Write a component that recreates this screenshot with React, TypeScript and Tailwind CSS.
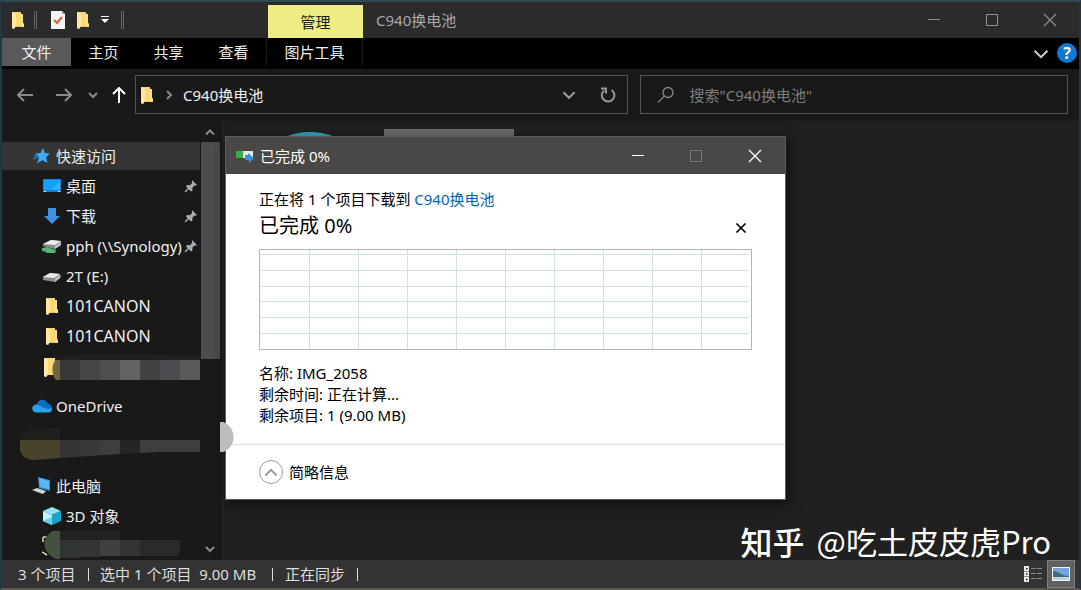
import React, { useState } from "react";

interface IconProps {
    className?: string;
}

interface TileSet {
    x: number;
    width: number;
    fill: string;
}

const FolderIcon: React.FC<IconProps> = ({ className = "" }) => (
    <svg className={className} width="14" height="18" viewBox="0 0 14 18" aria-hidden="true">
        <path d="M1 1h9v2h2v9l1 1v3H4l-1 2-2-1z" fill="#f0bf50" />
        <path d="M1 1l4 1v13l-2 3-2-1z" fill="#ffe9a0" />
        <path d="M5 1h5v14H5z" fill="#fbd778" />
        <path d="M10 3h2v9l1 1v3h-3z" fill="#ffdf86" />
    </svg>
);

const CheckDocIcon = () => (
    <svg width="16" height="20" viewBox="0 0 16 20" aria-hidden="true">
        <path d="M1 1h11l3 3v15H1z" fill="#f4f4f4" />
        <path d="M12 1v3h3z" fill="#9a9a9a" />
        <path d="M4 10l3 3 5-6" fill="none" stroke="#d9602c" strokeWidth="2" />
    </svg>
);

const StarIcon = () => (
    <svg width="18" height="16" viewBox="0 0 18 16" aria-hidden="true">
        <path d="M10 0l2 5 5 .5-4 3.800 1.500 5.700-5-2.800-5.500 3 2-5.700L2 5.500l5.500-.4z" fill="#3fa9f5" />
        <path d="M1 8l4-1M0 11l5-2" stroke="#2879bd" strokeWidth="1.500" />
    </svg>
);

const DesktopIcon = () => (
    <svg width="18" height="14" viewBox="0 0 18 14" aria-hidden="true">
        <rect width="18" height="13" fill="#1183d8" />
        <path d="M1 1h16v10H1z" fill="#16a0fa" />
        <path d="M8 11l9-9v9z" fill="#32b2ff" />
        <path d="M1 12.500h2M15 12.500h2" stroke="#e6f5ff" />
    </svg>
);

const DownloadIcon = () => (
    <svg width="18" height="18" viewBox="0 0 18 18" aria-hidden="true">
        <path d="M5 1h8v8h4l-8 8-8-8h4z" fill="#3f92e4" />
    </svg>
);

const DriveIcon = ({ network = false }: { network?: boolean }) => (
    <svg width="20" height="16" viewBox="0 0 20 16" aria-hidden="true">
        {network ? (
            <>
                <path d="M1 6l8-4 10 1v4l-6 4-12-3z" fill="#8c8c8c" />
                <path d="M1 6l8-4 10 1-6 4z" fill="#ececec" />
                <path d="M13 8l6-4v3l-6 4z" fill="#c4c4c4" />
                <path d="M0 10l5-1 3 1 6 2-1 3H5l-1-1-4-1z" fill="#55b470" />
            </>
        ) : (
            <>
                <path d="M1 9l7-4 10 1 1 3-6 5-12-2z" fill="#8c8c8c" />
                <path d="M1 9l7-4 10 1-6 4z" fill="#e8e8e8" />
                <path d="M13 11l5-4v3l-5 4z" fill="#c4c4c4" />
            </>
        )}
    </svg>
);

const CloudIcon = () => (
    <svg width="20" height="14" viewBox="0 0 20 14" aria-hidden="true">
        <path d="M5 5a5.500 5.500 0 0 1 10.500-.5A5 5 0 0 1 20 9.500L10 12 1 11A4 4 0 0 1 5 5z" fill="#0f6cbd" />
        <path d="M4 13.500a4 4 0 0 1-3.500-5C2 6 5 5.500 7 6.500l8 3.500 4.800-1c.6 2.500-.8 4.500-3 4.500z" fill="#2aa2f0" />
    </svg>
);

const ComputerIcon = () => (
    <svg width="20" height="18" viewBox="0 0 20 18" aria-hidden="true">
        <path d="M6 0l12 3v11L7 11z" fill="#2d8ad4" />
        <path d="M7 1l10 3v8L8 10z" fill="#5bb7f2" />
        <path d="M0 13l5-2 9 3-3 3-3-1z" fill="#d5d5d5" />
    </svg>
);

const CubeIcon = () => (
    <svg width="18" height="18" viewBox="0 0 18 18" aria-hidden="true">
        <path d="M9 0l9 4-9 4-9-4z" fill="#8fe3f3" />
        <path d="M0 4l9 4v10l-9-4z" fill="#c3f1fa" />
        <path d="M0 14l9-4v8z" fill="#5fd0e8" />
        <path d="M18 4L9 8v10l9-4z" fill="#18a3c8" />
    </svg>
);

const PinIcon = () => (
    <svg className="shrink-0" width="14" height="14" viewBox="0 0 14 14" aria-hidden="true">
        <path d="M8 1l5 5-1.500.8-1-.2-2.200 2.200.2 2.700-1.500 1L2 7.500l1-1.500 3 .2L8 4z" fill="#a5adb3" />
        <path d="M5 9l-4 4" stroke="#a5adb3" strokeWidth="1.500" />
    </svg>
);

const TransferIcon = () => (
    <svg width="20" height="14" viewBox="0 0 20 14" aria-hidden="true">
        <rect x="1" y="2" width="17" height="7" fill="#e4e9e4" />
        <rect x="1" y="2" width="7" height="7" fill="#38b045" />
        <path d="M10 6h3V4l6 5-5 5v-3h-4z" fill="#3d8fdd" />
    </svg>
);

const Chevron = ({ dir, size = 10, className = "", stroke = 2 }: { dir: "up" | "down" | "right"; size?: number; className?: string; stroke?: number }) => {
    const paths = {
        up: "M1 7.500l4-4 4 4",
        down: "M1 3l4 4 4-4",
        right: "M3 1l4 4-4 4",
    };
    return (
        <svg className={className} width={size} height={size} viewBox="0 0 10 10" aria-hidden="true">
            <path d={paths[dir]} fill="none" stroke="currentColor" strokeWidth={(stroke * 10) / size} />
        </svg>
    );
};

const Arrow = ({ rotate, className = "" }: { rotate: number; className?: string }) => (
    <svg className={className} width="16" height="16" viewBox="0 0 16 16" aria-hidden="true">
        <g transform={`rotate(${rotate} 8 8)`} fill="none" stroke="currentColor" strokeWidth="2">
            <path d="M1 8h15M7 2L1 8l6 6" />
        </g>
    </svg>
);

const WindowGlyph = ({ kind }: { kind: "min" | "max" | "close" }) => (
    <svg width="14" height="14" viewBox="0 0 14 14" fill="none" stroke="currentColor" aria-hidden="true">
        {kind === "min" && <path d="M1 6.500h12" />}
        {kind === "max" && <rect x="1.500" y="1.500" width="11" height="11" />}
        {kind === "close" && <path d="M1 1l12 12M13 1L1 13" strokeWidth="1.300" />}
    </svg>
);

// censored labels in the tree
const hiddenFolder: TileSet[] = [
    { x: 20, width: 20, fill: "#383838" },
    { x: 40, width: 20, fill: "#454545" },
    { x: 60, width: 20, fill: "#4e4e4e" },
    { x: 80, width: 20, fill: "#626262" },
    { x: 100, width: 20, fill: "#424242" },
    { x: 120, width: 20, fill: "#4b4d50" },
    { x: 140, width: 20, fill: "#5a5a5a" },
];

const hiddenAccount: TileSet[] = [
    { x: 40, width: 20, fill: "#343434" },
    { x: 60, width: 20, fill: "#393939" },
    { x: 80, width: 20, fill: "#3e3e3e" },
    { x: 100, width: 20, fill: "#252525" },
    { x: 120, width: 60, fill: "#3e3e3e" },
];

const TreeRow = ({ icon, label, nested = false, pinned = false, large = false, selected = false }: {
    icon: React.ReactNode;
    label: string;
    nested?: boolean;
    pinned?: boolean;
    large?: boolean;
    selected?: boolean;
}) => (
    <li className={`my-px flex h-7 shrink-0 items-center gap-0.5 pr-0.5 ${nested ? "pl-[38px]" : "pl-7"} ${selected ? "bg-[#343434]" : ""}`}>
        <span className="flex w-6 shrink-0 justify-center">{icon}</span>
        <button type="button" className={`min-w-0 flex-1 overflow-hidden whitespace-nowrap text-left text-[#f0f0f0] ${large ? "text-base" : ""}`}>
            {label}
        </button>
        {pinned && <PinIcon />}
    </li>
);

const Sidebar = () => (
    <nav aria-label="导航窗格" className="flex w-[221px] shrink-0 border-r border-[#2c2c2c] bg-[#191919]">
        <ul className="flex min-w-0 flex-1 flex-col pt-5">
            <TreeRow icon={<StarIcon />} label="快速访问" selected />
            <TreeRow icon={<DesktopIcon />} label="桌面" nested pinned />
            <TreeRow icon={<DownloadIcon />} label="下载" nested pinned />
            <TreeRow icon={<DriveIcon network />} label="pph (\\Synology)" nested pinned />
            <TreeRow icon={<DriveIcon />} label="2T (E:)" nested />
            <TreeRow icon={<FolderIcon />} label="101CANON" nested large />
            <TreeRow icon={<FolderIcon />} label="101CANON" nested large />
            <li className="mb-2.5 h-[30px] shrink-0 pl-[38px]">
                <svg width="160" height="30" viewBox="0 0 160 30" aria-hidden="true">
                    <path d="M4 7h11v17h-7l-2 2-2-1z" fill="#fbd778" />
                    <path d="M4 7l4 1v14l-2 4-2-1z" fill="#ffe9a0" />
                    <path d="M20 6c20-5 50-3 140-2v5H16z" fill="#202020" />
                    <path d="M20 9h-5c-4 7-3 16 1 20h4z" fill="#6f6440" />
                    {hiddenFolder.map((t) => (
                        <rect key={t.x} x={t.x} y="9" width={t.width} height="20" fill={t.fill} />
                    ))}
                </svg>
            </li>
            <TreeRow icon={<CloudIcon />} label="OneDrive" />
            <li className="h-[50px] shrink-0 pl-[18px]">
                <svg width="180" height="50" viewBox="0 0 180 50" aria-hidden="true">
                    <path d="M0 19c0-8 10-12 40-12v12z" fill="#201f1b" />
                    <path d="M0 19h40v18l-26 2C4 38 1 34 0 28z" fill="#4a432c" />
                    <clipPath id="smear">
                        <path d="M40 19h140v12h-40l-40 2-60 4z" />
                    </clipPath>
                    <g clipPath="url(#smear)">
                        {hiddenAccount.map((t) => (
                            <rect key={t.x} x={t.x} y="19" width={t.width} height="20" fill={t.fill} />
                        ))}
                    </g>
                </svg>
            </li>
            <TreeRow icon={<ComputerIcon />} label="此电脑" />
            <TreeRow icon={<CubeIcon />} label="3D 对象" nested />
            <li className="h-7 shrink-0 pl-10">
                <svg width="140" height="28" viewBox="0 0 140 28" aria-hidden="true">
                    <path d="M1 6h4M1 6v5M0 21l5 3" stroke="#d8d4a0" strokeWidth="1.500" />
                    <path d="M18 0v28h-4C4 24 0 14 4 6 8 1 12-2 18-3z" fill="#41523f" />
                    <path d="M18-3c24-1 40 0 60 0v12H18z" fill="#222" />
                    <path d="M18 9h20v18H18z" fill="#303432" />
                    <path d="M38 9h20v17H38z" fill="#343436" />
                    <path d="M58 9h20v16H58z" fill="#404040" />
                    <path d="M78 9h20v16H78z" fill="#333" />
                    <path d="M98 9h40v12l-4 4H98z" fill="#2a2a2a" />
                </svg>
            </li>
        </ul>
        <div className="flex w-[22px] flex-col items-center pr-0.5 text-[#8a8a8a]">
            <button type="button" aria-label="向上滚动" className="flex h-[21px] items-center">
                <Chevron dir="up" />
            </button>
            <div className="h-[217px] w-[19px] bg-[#4d4d4d]" />
            <button type="button" aria-label="向下滚动" className="mt-auto flex h-[22px] items-center">
                <Chevron dir="down" />
            </button>
        </div>
    </nav>
);

const columns = [50, 99, 148, 197, 246, 295, 344, 393, 442];
const rows = [5, 21, 37, 52, 68, 84];

const TransferDialog = () => {
    const [expanded, setExpanded] = useState(true);

    return (
        <section
            role="dialog"
            aria-label="已完成 0%"
            className="absolute left-[223px] top-[15px] w-[561px] border border-[#5c5c5c] bg-white text-black shadow-[2px_4px_14px_rgba(0,0,0,0.6)]"
        >
            <header className="flex h-[37px] items-center bg-[#4a4846] pl-[9px] text-white">
                <TransferIcon />
                <h2 className="ml-[5px] flex-1">已完成 0%</h2>
                <button type="button" aria-label="最小化" className="flex h-full w-[58px] items-center justify-center">
                    <WindowGlyph kind="min" />
                </button>
                <button type="button" aria-label="最大化" disabled className="flex h-full w-[58px] items-center justify-center text-[#797775]">
                    <WindowGlyph kind="max" />
                </button>
                <button type="button" aria-label="关闭" className="flex h-full w-[60px] items-center justify-center">
                    <WindowGlyph kind="close" />
                </button>
            </header>

            <div className="px-[33px] pb-[18px] pt-[13px]">
                <p className="leading-6">
                    正在将 1 个项目下载到 <a href="#folder" className="text-[#0066b4]">C940换电池</a>
                </p>
                <div className="flex items-center justify-between">
                    <h3 className="text-xl leading-[30px]">已完成 0%</h3>
                    <button type="button" aria-label="取消" className="pr-[5px] pt-1">
                        <svg width="12" height="12" viewBox="0 0 12 12" stroke="currentColor" strokeWidth="1.700" aria-hidden="true">
                            <path d="M1.500 1.500l9 9M10.500 1.500l-9 9" />
                        </svg>
                    </button>
                </div>
                <svg className="mt-2 block w-full" height="101" viewBox="0 0 493 101" aria-label="传输速度">
                    <g stroke="#cde5da">
                        {columns.map((x) => (
                            <path key={x} d={`M${x + 0.5} 1v99`} />
                        ))}
                        {rows.map((y) => (
                            <path key={y} d={`M1 ${y + 0.5}h489`} />
                        ))}
                    </g>
                    <rect x="0.5" y="0.5" width="492" height="100" fill="none" stroke="#b4b4b4" />
                </svg>
                {expanded && (
                    <div className="mt-[13px] leading-[21px]">
                        <p>名称: IMG_2058</p>
                        <p>剩余时间: 正在计算...</p>
                        <p>剩余项目: 1 (9.00 MB)</p>
                    </div>
                )}
            </div>

            <footer className="flex h-[55px] items-center border-t border-[#dfdfdf] px-[33px]">
                <button type="button" onClick={() => setExpanded(!expanded)} className="flex items-center gap-1.5">
                    <span className="flex size-6 items-center justify-center rounded-full border border-[#999] text-[#999]">
                        <Chevron dir={expanded ? "up" : "down"} size={14} />
                    </span>
                    {expanded ? "简略信息" : "详细信息"}
                </button>
            </footer>
        </section>
    );
};

const TitleBar = () => (
    <header className="flex h-9 items-center bg-[#2b2b2b]">
        <div className="flex w-[266px] shrink-0 items-center pl-[9px]">
            <FolderIcon />
            <span className="ml-[9px] h-[18px] w-[3px] border-x border-[#666]" />
            <span className="ml-[13px]"><CheckDocIcon /></span>
            <span className="ml-2.5"><FolderIcon /></span>
            <button type="button" aria-label="自定义快速访问工具栏" className="ml-[11px]">
                <svg width="8" height="8" viewBox="0 0 8 8" aria-hidden="true">
                    <path d="M0 .5h8" stroke="#fff" />
                    <path d="M0 3h8L4 7z" fill="#fff" />
                </svg>
            </button>
            <span className="ml-3 h-[18px] w-[3px] border-x border-[#666]" />
        </div>
        <button type="button" className="h-[33px] w-[95px] shrink-0 self-end bg-[#eded84] text-[#1a1a1a]">管理</button>
        <h1 className="ml-[13px] flex-1 text-[#a8a8a8]">C940换电池</h1>
        <div className="flex h-full text-[#8c8c8c]">
            <button type="button" aria-label="最小化" className="flex w-[58px] items-center justify-center">
                <WindowGlyph kind="min" />
            </button>
            <button type="button" aria-label="最大化" className="flex w-[58px] items-center justify-center">
                <WindowGlyph kind="max" />
            </button>
            <button type="button" aria-label="关闭" className="flex w-[58px] items-center justify-center">
                <WindowGlyph kind="close" />
            </button>
        </div>
    </header>
);

const RibbonTabs = () => (
    <div className="flex h-[31px] bg-black pb-[3px] text-[#f0f0f0]">
        <button type="button" className="w-[69px] bg-[#595959]">文件</button>
        <button type="button" className="w-[65px]">主页</button>
        <button type="button" className="w-[65px]">共享</button>
        <button type="button" className="w-[65px]">查看</button>
        <button type="button" className="w-[97px] border-x border-[#1c1c1c]">图片工具</button>
        <button type="button" aria-label="展开功能区" className="ml-auto mt-[3px] pr-2 text-[#d0d0d0]">
            <Chevron dir="down" size={16} />
        </button>
        <button type="button" aria-label="帮助" className="mr-0.5 mt-[5px] size-5 shrink-0 rounded-full bg-[#0f78d4] text-base font-bold leading-5 text-white">
            ?
        </button>
    </div>
);

const AddressRow = () => (
    <div className="flex h-[52px] items-center bg-[#191919] pb-[1px] pr-[11px]">
        <div className="flex w-[133px] shrink-0 items-center pl-[15px] text-[#8a8a8a]">
            <button type="button" aria-label="后退"><Arrow rotate={0} /></button>
            <button type="button" aria-label="前进" className="ml-[23px]"><Arrow rotate={180} /></button>
            <button type="button" aria-label="最近位置" className="ml-4"><Chevron dir="down" /></button>
            <button type="button" aria-label="上移" className="ml-[13px] text-white"><Arrow rotate={90} /></button>
        </div>
        <div className="flex h-[39px] min-w-0 flex-[486] items-center border border-[#535353] pl-1">
            <FolderIcon />
            <Chevron dir="right" className="ml-2.5 text-[#8a8a8a]" />
            <button type="button" className="ml-[9px] text-[#f0f0f0]">C940换电池</button>
            <button type="button" aria-label="以前的位置" className="ml-auto text-[#9a9a9a]">
                <Chevron dir="down" size={14} />
            </button>
            <button type="button" aria-label="刷新" className="ml-[23px] mr-[10px] text-[#9a9a9a]">
                <svg width="18" height="18" viewBox="0 0 18 18" fill="none" stroke="currentColor" strokeWidth="2" aria-hidden="true">
                    <path d="M12.500 4a6.300 6.300 0 1 1-7.500.5M2 2.500h5v5" />
                </svg>
            </button>
        </div>
        <label className="ml-3 flex h-[39px] min-w-0 flex-[410] items-center border border-[#535353] pl-4">
            <svg width="18" height="18" viewBox="0 0 18 18" fill="none" stroke="#858585" strokeWidth="1.300" aria-hidden="true">
                <circle cx="11" cy="6.500" r="5" />
                <path d="M7.500 10L1 16.500" />
            </svg>
            <input
                type="search"
                aria-label="搜索"
                placeholder='搜索"C940换电池"'
                className="ml-[15px] min-w-0 flex-1 bg-transparent text-[#ddd] outline-none placeholder:text-[#7d7d7d]"
            />
        </label>
    </div>
);

const StatusBar = () => (
    <footer className="flex h-7 items-center bg-[#333] pl-4 text-[#dedede]">
        <span className="w-[70px]">3 个项目</span>
        <span className="h-[13px] w-px bg-[#dedede]" />
        <span className="ml-[11px] w-[172px] whitespace-pre">选中 1 个项目  9.00 MB</span>
        <span className="h-[13px] w-px bg-[#dedede]" />
        <span className="ml-3 w-[72px]">正在同步</span>
        <span className="h-[13px] w-px bg-[#dedede]" />
        <button type="button" aria-label="详细信息视图" className="ml-auto">
            <svg width="20" height="18" viewBox="0 0 20 18" fill="none" aria-hidden="true">
                <path d="M1 1h5v5H1zM1 6.500h5v5H1zM1 12h5v5H1z" fill="#e8e8e8" />
                <path d="M3 3h1.500v1.500H3zM3 8.300h1.500v1.500H3zM3 13.700h1.500v1.500H3z" fill="#222" />
                <path d="M8 3.500h5M14 3.500h5M8 8.500h5M14 8.500h5M8 13.500h5M14 13.500h5" stroke="#888" />
            </svg>
        </button>
        <button type="button" aria-label="大缩略图视图" className="ml-1 mr-1 flex h-7 w-7 items-center justify-center border border-[#808080] bg-[#606060]">
            <svg width="18" height="14" viewBox="0 0 18 14" aria-hidden="true">
                <rect width="18" height="14" fill="#f2f2f2" />
                <rect x="1" y="1" width="16" height="12" fill="#6fa4dc" />
                <path d="M1 4c6 0 8 5 16 5v4H1z" fill="#3e6e7c" />
                <path d="M1 10h16v3H1z" fill="#b8d6e6" />
            </svg>
        </button>
    </footer>
);

export default function App() {
    return (
        <div className="flex min-h-screen w-full flex-col border-x-2 border-y-2 border-b-[#5c5650] border-l-[#22383f] border-r-[#26343f] border-t-[#2e4a52] bg-[#202020] font-['Noto_Sans','Noto_Sans_CJK_SC',sans-serif] text-[15px] leading-5">
            <TitleBar />
            <RibbonTabs />
            <AddressRow />
            <div className="relative flex flex-1">
                <Sidebar />
                <main className="flex min-w-0 flex-1 gap-[9px] overflow-hidden bg-[#202020] pl-[22px] pt-2">
                    <div className="mt-[3px] size-[130px] shrink-0 rounded-full bg-[#2fa8bd]" />
                    <div className="h-[100px] w-[130px] shrink-0 bg-[#6c6c6c]" />
                </main>
                <TransferDialog />
                {/* scribble left by the marker tool */}
                <svg className="absolute left-[218px] top-[301px]" width="14" height="30" viewBox="0 0 14 30" aria-hidden="true">
                    <path d="M0 0h3c14 5 14 25 0 30H0z" fill="#bcbcbc" />
                </svg>
                <p className="absolute bottom-[3px] right-7 flex items-center gap-3 whitespace-nowrap font-['Noto_Sans_CJK_SC',sans-serif] text-[31px] leading-8 text-white">
                    <span className="text-[32px] font-medium">知乎</span>
                    <span>@吃土皮皮虎Pro</span>
                </p>
            </div>
            <StatusBar />
        </div>
    );
}
